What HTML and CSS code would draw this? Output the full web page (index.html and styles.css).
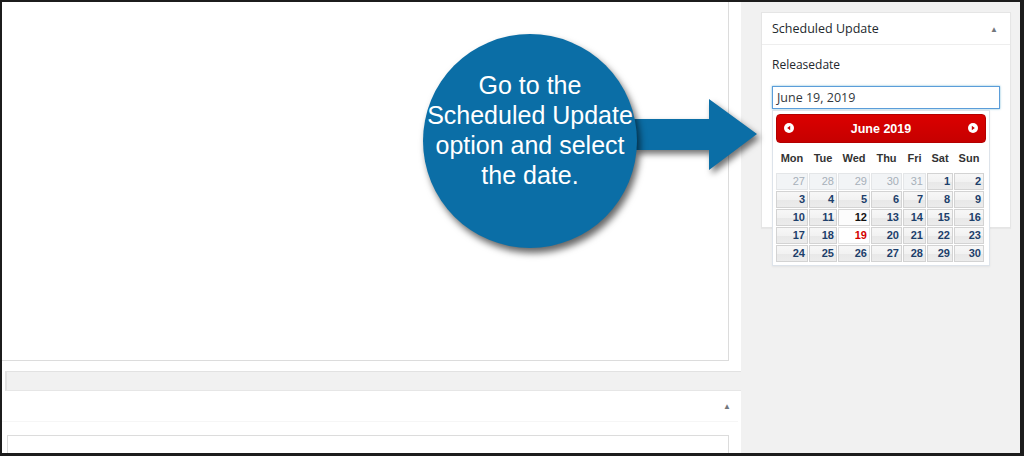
FILE: index.html
```html
<!DOCTYPE html>
<html>
<head>
<meta charset="utf-8">
<link rel="stylesheet" href="styles.css">
</head>
<body>
<div class="screen">
  <div class="main">
    <div class="editor"></div>
    <div class="strip"></div>
    <div class="postbox">
      <div class="postbox-head"><span class="toggle">▲</span></div>
      <div class="postbox-body"><div class="wide-input"></div></div>
    </div>
  </div>
  <div class="sidebar">
    <div class="box">
      <div class="box-head">
        <span class="box-title">Scheduled Update</span>
        <span class="toggle">▲</span>
      </div>
      <div class="box-body">
        <div class="label">Releasedate</div>
        <div class="field">
          <div class="date-input">June 19, 2019</div>
          <div class="datepicker">
            <div class="dp-head">
              <span class="dp-btn dp-prev"><svg viewBox="0 0 10 10" width="10" height="10"><circle cx="5" cy="5" r="5" fill="#fff"/><polygon points="6.2,2.8 6.2,7.2 3.2,5" fill="#c80000"/></svg></span>
              <span class="dp-title">June 2019</span>
              <span class="dp-btn dp-next"><svg viewBox="0 0 10 10" width="10" height="10"><circle cx="5" cy="5" r="5" fill="#fff"/><polygon points="3.8,2.8 3.8,7.2 6.8,5" fill="#c80000"/></svg></span>
            </div>
            <div class="dp-dow">
              <span>Mon</span><span>Tue</span><span>Wed</span><span>Thu</span><span>Fri</span><span>Sat</span><span>Sun</span>
            </div>
            <div class="dp-grid">
              <span class="day other">27</span><span class="day other">28</span><span class="day other">29</span><span class="day other">30</span><span class="day other">31</span><span class="day">1</span><span class="day">2</span>
              <span class="day">3</span><span class="day">4</span><span class="day">5</span><span class="day">6</span><span class="day">7</span><span class="day">8</span><span class="day">9</span>
              <span class="day">10</span><span class="day">11</span><span class="day today">12</span><span class="day">13</span><span class="day">14</span><span class="day">15</span><span class="day">16</span>
              <span class="day">17</span><span class="day">18</span><span class="day selected">19</span><span class="day">20</span><span class="day">21</span><span class="day">22</span><span class="day">23</span>
              <span class="day">24</span><span class="day">25</span><span class="day">26</span><span class="day">27</span><span class="day">28</span><span class="day">29</span><span class="day">30</span>
            </div>
          </div>
        </div>
      </div>
    </div>
  </div>

  <svg class="arrow" viewBox="0 0 140 90" width="140" height="90">
    <polygon points="2,25 77,25 77,5 125,40 77,76 77,56 2,56" fill="#0b6ea6"/>
  </svg>
  <div class="callout">
    <div class="callout-text">Go to the<br>Scheduled Update<br>option and select<br>the date.</div>
  </div>
</div>
</body>
</html>
```

FILE: styles.css
```css
* { box-sizing: border-box; }
html, body { margin: 0; padding: 0; background: #fff; }
body { font-family: "Open Sans", "Noto Sans", sans-serif; }

.screen {
  position: relative;
  width: 1024px;
  height: 456px;
  border-style: solid;
  border-color: #1c1c1c;
  border-width: 2px 4px 3px 2px;
  display: flex;
  overflow: hidden;
}

.main {
  width: 739px;
  display: flex;
  flex-direction: column;
  background: #fff;
}
.editor {
  width: 727px;
  height: 359px;
  border-right: 1px solid #dcdcdc;
  border-bottom: 1px solid #dcdcdc;
  background: #fff;
}
.strip {
  margin-top: 10px;
  margin-left: 3px;
  margin-right: -2px;
  height: 20px;
  background: #f1f1f1;
  border-top: 1px solid #e2e2e2;
  border-bottom: 1px solid #e6e6e6;
  border-left: 2px solid #e2e2e2;
}
.postbox {
  flex: 1;
  width: 736px;
  background: #fff;
  display: flex;
  flex-direction: column;
}
.postbox-head {
  height: 31px;
  border-bottom: 1px solid #f6f6f6;
  display: flex;
  align-items: center;
  justify-content: flex-end;
  padding-right: 7px;
}
.toggle {
  font-size: 8px;
  color: #72777c;
  line-height: 1;
}
.postbox-body {
  flex: 1;
  padding-top: 13px;
  padding-left: 5px;
}
.wide-input {
  width: 722px;
  height: 100%;
  border: 1px solid #dcdcdc;
  border-bottom: none;
}

.sidebar {
  flex: 1;
  background: #f1f1f1;
  padding: 10px 0 0 20px;
}
.box {
  width: 250px;
  background: #fff;
  border: 1px solid #e5e5e5;
  box-shadow: 0 1px 1px rgba(0,0,0,0.04);
}
.box-head {
  height: 32px;
  border-bottom: 1px solid #eeeeee;
  display: flex;
  align-items: center;
  justify-content: space-between;
  padding: 0 12px 0 10px;
}
.box-title {
  font-size: 12.5px;
  color: #23282d;
}
.box-body {
  padding: 11px 10px 118px 10px;
}
.label {
  font-size: 12px;
  line-height: 18px;
  color: #23282d;
  margin-bottom: 12px;
}
.field { position: relative; }
.date-input {
  width: 228px;
  height: 23px;
  border: 1px solid #5b9dd9;
  box-shadow: 0 0 2px rgba(30,140,190,0.6);
  font-size: 12.5px;
  line-height: 21px;
  padding-left: 4px;
  color: #32373c;
}

.datepicker {
  position: absolute;
  left: 0;
  top: 24px;
  width: 218px;
  background: #fff;
  border: 1px solid #dde3ea;
  padding: 3px 3px 3px 3px;
  font-family: "Liberation Sans", Arial, sans-serif;
  box-shadow: 0 1px 2px rgba(0,0,0,0.06);
}
.dp-head {
  position: relative;
  height: 29px;
  border: 1px solid #b40000;
  border-radius: 4px;
  background: linear-gradient(#db0000, #c60000);
  display: flex;
  align-items: center;
  justify-content: center;
}
.dp-title {
  color: #fff;
  font-weight: bold;
  font-size: 12.5px;
}
.dp-btn {
  position: absolute;
  top: 8px;
  width: 10px;
  height: 10px;
  display: block;
}
.dp-btn svg { display: block; }
.dp-prev { left: 7px; }
.dp-next { right: 7px; }

.dp-dow,
.dp-grid {
  display: grid;
  grid-template-columns: 32px 28px 32px 31px 23px 26px 30px;
  column-gap: 1px;
}
.dp-dow {
  margin-top: 4px;
  height: 22px;
  line-height: 22px;
  font-size: 11px;
  font-weight: bold;
  color: #333;
  text-align: center;
}
.dp-grid {
  margin-top: 4px;
  row-gap: 1px;
  grid-auto-rows: 17px;
}
.day {
  border: 1px solid #d3d3d3;
  background: linear-gradient(#f7f7f7 0%, #f2f2f2 50%, #e8e8e8 51%, #ececec 100%);
  font-size: 11px;
  font-weight: bold;
  color: #1d3f6b;
  text-align: right;
  line-height: 15px;
  padding-right: 2px;
}
.day.other {
  background: #f2f4f6;
  border-color: #e4e6e8;
  color: #a7b0b9;
  font-weight: normal;
}
.day.today {
  background: #fcfcfc;
  border-color: #d6d6d6;
  color: #111;
}
.day.selected {
  background: #fff;
  border-color: #e6e6e6;
  color: #d40000;
}

.arrow {
  position: absolute;
  left: 630px;
  top: 92px;
  filter: drop-shadow(3px 4px 3px rgba(0,0,0,0.55));
}
.callout {
  position: absolute;
  left: 421px;
  top: 32px;
  width: 214px;
  height: 214px;
  border-radius: 50%;
  background: #0b6ea6;
  box-shadow: 3px 5px 7px rgba(0,0,0,0.6);
  display: flex;
  justify-content: center;
  padding-top: 36px;
}
.callout-text {
  font-family: "Liberation Sans", Arial, sans-serif;
  font-size: 25px;
  line-height: 30px;
  color: #fff;
  text-align: center;
  white-space: nowrap;
}
```
